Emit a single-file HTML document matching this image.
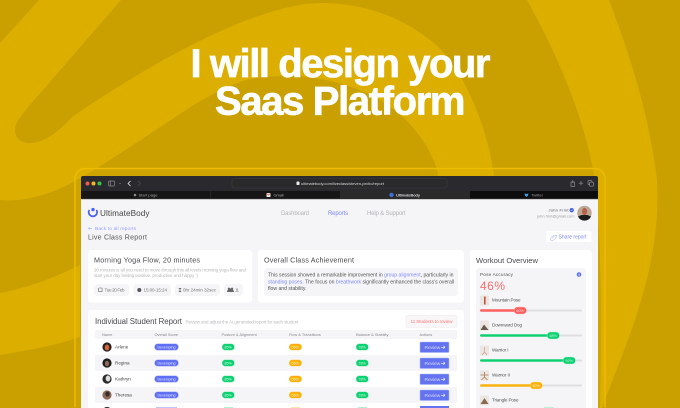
<!DOCTYPE html>
<html><head><meta charset="utf-8"><title>I will design your Saas Platform</title>
<style>
html,body{margin:0;padding:0;width:680px;height:408px;overflow:hidden;background:#c9a000}
svg{display:block}
text{font-family:"Liberation Sans",sans-serif}
</style></head><body>
<svg width="680" height="408" viewBox="0 0 680 408" xmlns="http://www.w3.org/2000/svg" style="position:absolute;left:0;top:0;overflow:hidden">
<defs><filter id="b" filterUnits="userSpaceOnUse" x="75" y="170" width="530" height="238"><feGaussianBlur stdDeviation="0.28"/></filter>
<clipPath id="page"><rect x="81" y="176" width="517" height="232"/></clipPath></defs>
<!-- background -->
<rect width="680" height="408" fill="#dbae00"/>
<g fill="#c9a000">
<path d="M0,0H39L0,43Z"/>
<path d="M121,0H527C560,60 585,120 595,180C602,250 602,330 600,408H500C500,320 500,240 494,175C488,130 465,70 434,43C400,15 360,3 321,3C280,3 200,30 72,117C60,130 45,143 30,143C18,143 14,135 15,127C18,118 30,105 43,90Z"/>
<path d="M0,200C25,202 50,195 77,180C100,168 170,120 197,103C220,90 240,80 256,78C300,72 345,80 380,100C410,118 430,145 438,173C445,250 448,330 450,408H80V265C120,240 170,195 207,178C235,163 270,153 300,158C315,161 325,170 335,185L340,300L80,300V265C50,280 25,288 0,293Z"/>
<path d="M0,355C30,350 60,345 85,335V408H0Z"/>
<path d="M609,0H680V408H602C625,345 662,270 657,180C650,120 632,60 609,0Z"/>
</g>
<!-- headline -->
<g fill="#fff" stroke="#fff" stroke-width=".7" font-weight="700" font-size="40" text-anchor="start">
<text x="190.5" y="77" textLength="300" lengthAdjust="spacing">I will design your</text>
<text x="215" y="114.5" textLength="250.5" lengthAdjust="spacing">Saas Platform</text>
</g>
<!-- frame -->
<path d="M75,407.5V178.5a10,10 0 0 1 10,-10H595a10,10 0 0 1 10,10V407.5Z" fill="#ffc800" fill-opacity=".08"/>
<path d="M75,407.5V178.5a10,10 0 0 1 10,-10H595a10,10 0 0 1 10,10V407.5" fill="none" stroke="#eebc00" stroke-width="1.4"/>
<g filter="url(#b)">
<!-- browser chrome -->
<path d="M81,178a2,2 0 0 1 2,-2H596a2,2 0 0 1 2,2V199H81Z" fill="#2c2c2e"/>
<rect x="81" y="191" width="259" height="8" fill="#141414"/>
<rect x="340" y="191" width="130" height="8" fill="#2a2a2c"/>
<rect x="470" y="191" width="128" height="8" fill="#0e0e0e"/>
<rect x="210" y="191" width=".5" height="8" fill="#333"/>
<circle cx="87.5" cy="183.5" r="2" fill="#ee5a50"/><circle cx="93.5" cy="183.5" r="2" fill="#f4b52c"/><circle cx="99.5" cy="183.5" r="2" fill="#38c24a"/>
<rect x="108.5" y="181" width="6" height="5" rx="1" fill="none" stroke="#8a8a8c" stroke-width=".7"/><path d="M110.5,181v5" stroke="#8a8a8c" stroke-width=".7"/>
<path d="M119,183.2l1,.8 1,-.8" stroke="#8a8a8c" stroke-width=".5" fill="none"/>
<path d="M130.5,181l-2.4,2.5 2.4,2.5" stroke="#ddd" stroke-width=".9" fill="none"/>
<path d="M138,181l2.4,2.5 -2.4,2.5" stroke="#47474a" stroke-width=".9" fill="none"/>
<rect x="232" y="178.5" width="215" height="9.5" rx="2.5" fill="#2a2a2c" stroke="#3c3c3e" stroke-width=".6"/>
<rect x="296.5" y="181.5" width="3" height="3.5" rx=".8" fill="#eee"/>
<text x="301" y="184.8" font-size="4" fill="#d8d8d8" textLength="83">ultimatebody.com/liveclass/steven-pedro/report</text>
<path d="M571,182h3.4v4.5h-3.4zM572.7,180v3" stroke="#8e8e90" stroke-width=".7" fill="none"/>
<path d="M581,181v4.4M578.8,183.2h4.4" stroke="#8e8e90" stroke-width=".7"/>
<rect x="588" y="180.6" width="4" height="4" rx=".8" fill="none" stroke="#8e8e90" stroke-width=".7"/><rect x="589.6" y="182.2" width="4" height="4" rx=".8" fill="#2c2c2e" stroke="#8e8e90" stroke-width=".7"/>
<circle cx="135" cy="195" r="1.3" fill="#888"/><text x="138.5" y="196.7" font-size="4" fill="#aaa" textLength="19">Start page</text>
<rect x="266.5" y="193" width="4" height="4" rx=".6" fill="#eee"/><path d="M266.8,193.6l1.7,1.4 1.7,-1.4" stroke="#d8483a" stroke-width=".7" fill="none"/><text x="273.5" y="196.7" font-size="4" fill="#aaa" textLength="10">Gmail</text>
<circle cx="391.5" cy="195" r="2.2" fill="#3f6fd8"/><text x="396" y="196.7" font-size="4" fill="#cfcfd2" font-weight="700" textLength="24">UltimateBody</text>
<path d="M524.5,193.5q2,.8 4,0l-.6,2.2 -1.4,1.3 -1.4,-1.3z" fill="#3f9fe8"/><text x="531" y="196.7" font-size="4" fill="#9a9a9a" textLength="12">Twitter</text>
<!-- page -->
<rect x="81" y="199" width="517" height="209" fill="#f5f5f8"/>
<rect x="81" y="198.2" width="517" height="1" fill="#2a2a2c"/>
<g clip-path="url(#page)">
<!-- logo -->
<path d="M89,210.6a4.2,4.2 0 1 0 7.8,0" fill="none" stroke="#4d63ee" stroke-width="1.7" stroke-linecap="round"/><circle cx="93" cy="209.6" r="1.7" fill="#4d63ee"/>
<text x="100" y="216" font-size="8.2" fill="#444" textLength="49.5">UltimateBody</text>
<text x="281" y="215.2" font-size="6" fill="#b4b4b8" textLength="28">Dashboard</text>
<text x="328" y="215.2" font-size="6" fill="#7f89f6" textLength="20">Reports</text>
<text x="367" y="215.2" font-size="6" fill="#b4b4b8" textLength="38.5">Help &amp; Support</text>
<text x="548.5" y="211.7" font-size="4" fill="#555" textLength="20">John Frint</text>
<circle cx="571.7" cy="210.2" r="2.2" fill="#4a63e8"/><path d="M570.8,210.2l.7,.7 1.2,-1.2" stroke="#fff" stroke-width=".5" fill="none"/>
<text x="537" y="217.7" font-size="3.9" fill="#a0a0a4" textLength="37.5">john.frint@gmail.com</text>
<circle cx="584.5" cy="213" r="7.2" fill="#bba896"/><path d="M578,216.5a7.2,7.2 0 0 0 13,0l-3.5,-1.5h-6z" fill="#1c1c1e"/><ellipse cx="584.6" cy="211.5" rx="2.6" ry="3.6" fill="#b5624a"/>
<path d="M92,228.5h-3.5m1.4,-1.3l-1.4,1.3 1.4,1.3" stroke="#8a94f6" stroke-width=".5" fill="none"/>
<text x="95" y="230.2" font-size="4.8" fill="#949df7" textLength="41">Back to all reports</text>
<text x="88" y="239.7" font-size="7" fill="#555" textLength="59">Live Class Report</text>
<rect x="546" y="231" width="45.5" height="11" rx="1.5" fill="#fff"/>
<path d="M552,238.5l3,-3a1,1 0 0 1 1.5,1.5l-3.4,3.4a1.6,1.6 0 0 1 -2.3,-2.3l3.2,-3.2" fill="none" stroke="#949df7" stroke-width=".5"/>
<text x="558.5" y="238.5" font-size="5" fill="#7f89f6" textLength="28">Share report</text>
<!-- card 1 -->
<rect x="88" y="250" width="164" height="52.5" rx="3" fill="#fff"/>
<text x="94" y="262.5" font-size="7.2" fill="#4a4a4e" textLength="106">Morning Yoga Flow, 20 minutes</text>
<text x="94" y="271.7" font-size="4.6" fill="#b8b8bc" textLength="152">20 minutes is all you need to move through this all levels morning yoga flow and</text>
<text x="94" y="277" font-size="4.6" fill="#b8b8bc" textLength="104">start your day feeling positive, productive and happy :)</text>
<g fill="#f5f5f8"><rect x="94" y="284" width="35.5" height="12" rx="3.5"/><rect x="133.5" y="284" width="37.5" height="12" rx="3.5"/><rect x="175" y="284" width="45" height="12" rx="3.5"/><rect x="224" y="284" width="19" height="12" rx="3.5"/></g>
<g font-size="4.5" fill="#777"><text x="104.5" y="291.7" textLength="20">Tue 20 Feb</text><text x="143.5" y="291.7" textLength="23.5">15:00-15:24</text><text x="183" y="291.7" textLength="33">0hr 24min 32sec</text><text x="235" y="291.7" textLength="4">11</text></g>
<rect x="98.5" y="288" width="3.6" height="3.6" rx=".5" fill="none" stroke="#666" stroke-width=".6"/><circle cx="139.3" cy="290" r="2" fill="#555"/><path d="M178.5,288h3l-1.5,2 1.5,2h-3l1.5,-2z" fill="#666"/><circle cx="229" cy="288.8" r="1.2" fill="#666"/><circle cx="232" cy="288.8" r="1.2" fill="#666"/><path d="M227,292a2,2 0 0 1 7,0z" fill="#666"/>
<!-- card 2 -->
<rect x="258" y="250" width="206" height="52.5" rx="3" fill="#fff"/>
<text x="264" y="262.5" font-size="7.2" fill="#4a4a4e" textLength="90">Overall Class Achievement</text>
<rect x="264" y="268" width="194" height="28" rx="3" fill="#f5f5f8"/>
<g font-size="5.1" fill="#555">
<text x="268" y="276.7">This session showed a remarkable improvement in <tspan fill="#7f89f6">group alignment</tspan>, particularly in</text>
<text x="268" y="283.3"><tspan fill="#7f89f6">standing poses.</tspan> The focus on <tspan fill="#7f89f6">breathwork</tspan> significantly enhanced the class's overall</text>
<text x="268" y="290">flow and stability.</text>
</g>
<!-- table card -->
<path d="M88,408V313a3,3 0 0 1 3,-3H461a3,3 0 0 1 3,3V408Z" fill="#fff"/>
<text x="95" y="324" font-size="7.9" fill="#4a4a4e" textLength="87">Individual Student Report</text>
<text x="185.5" y="323.7" font-size="4.7" fill="#bbbbc0" textLength="113">Review and adjust the AI generated report for each student</text>
<rect x="406" y="315.5" width="51" height="12" rx="1.5" fill="#f8f6f7" stroke="#eeeaec" stroke-width=".5"/>
<text x="410.5" y="323.2" font-size="4.7" fill="#fb7a7a" textLength="42">11 Students to review</text>
<rect x="95" y="330" width="362" height="9" fill="#f5f5f8"/>
<g font-size="3.9" fill="#888"><text x="102" y="336">Name</text><text x="154.5" y="336">Overall Score</text><text x="221.5" y="336">Posture &amp; Alignment</text><text x="289" y="336">Flow &amp; Transitions</text><text x="356" y="336">Balance &amp; Stability</text><text x="419.5" y="336">Actions</text></g>
<rect x="95" y="355" width="362" height="16" fill="#f5f5f8"/><rect x="95" y="387" width="362" height="16" fill="#f5f5f8"/>
<!-- avatars -->
<circle cx="107" cy="347" r="4.6" fill="#222"/><ellipse cx="107" cy="347.5" rx="2.3" ry="3" fill="#d8643a"/>
<circle cx="107" cy="363" r="4.6" fill="#1c1c1c"/><ellipse cx="107" cy="363.5" rx="2.2" ry="2.8" fill="#8a6a58"/>
<circle cx="107" cy="379" r="4.6" fill="#2a2a2a"/><ellipse cx="108" cy="378.5" rx="2.4" ry="3" fill="#ddd"/>
<circle cx="107" cy="395" r="4.6" fill="#8a6a58"/><ellipse cx="107.5" cy="394" rx="2.2" ry="2.6" fill="#3a2e2a"/>
<path d="M104,408a4.6,4.6 0 0 1 6,0Z" fill="#333"/>
<g font-size="4.6" fill="#444"><text x="115" y="348.7">Arlene</text><text x="115" y="364.7">Regina</text><text x="115" y="380.7">Kathryn</text><text x="115" y="396.7">Theresa</text></g>
<!-- pills -->
<g fill="#5f70f2" stroke="#b5bdf9" stroke-width=".5"><rect x="154.5" y="343.7" width="24" height="6.6" rx="3.3"/><rect x="154.5" y="359.7" width="24" height="6.6" rx="3.3"/><rect x="154.5" y="375.7" width="24" height="6.6" rx="3.3"/><rect x="154.5" y="391.7" width="24" height="6.6" rx="3.3"/></g>
<g fill="#10d070" stroke="#a5eec8" stroke-width=".5"><rect x="222" y="343.7" width="12.5" height="6.6" rx="3.3"/><rect x="222" y="359.7" width="12.5" height="6.6" rx="3.3"/><rect x="222" y="375.7" width="12.5" height="6.6" rx="3.3"/><rect x="222" y="391.7" width="12.5" height="6.6" rx="3.3"/>
<rect x="356" y="343.7" width="12.5" height="6.6" rx="3.3"/><rect x="356" y="359.7" width="12.5" height="6.6" rx="3.3"/><rect x="356" y="375.7" width="12.5" height="6.6" rx="3.3"/><rect x="356" y="391.7" width="12.5" height="6.6" rx="3.3"/></g>
<g fill="#f8b208" stroke="#fcdf9a" stroke-width=".5"><rect x="289" y="343.7" width="12.8" height="6.6" rx="3.3"/><rect x="289" y="359.7" width="12.8" height="6.6" rx="3.3"/><rect x="289" y="375.7" width="12.8" height="6.6" rx="3.3"/><rect x="289" y="391.7" width="12.8" height="6.6" rx="3.3"/></g>
<rect x="156" y="407.4" width="21" height=".6" fill="#8f9cf5"/><rect x="224" y="407.4" width="9" height=".6" fill="#7de4ae"/><rect x="291" y="407.4" width="9" height=".6" fill="#fbd27a"/><rect x="358" y="407.4" width="9" height=".6" fill="#7de4ae"/>
<g font-size="3.6" fill="#dfe3ff"><text x="157.5" y="348.3">Developing</text><text x="157.5" y="364.3">Developing</text><text x="157.5" y="380.3">Developing</text><text x="157.5" y="396.3">Developing</text></g>
<g font-size="3.6" fill="#d5f8e6"><text x="224.5" y="348.3">85%</text><text x="224.5" y="364.3">85%</text><text x="224.5" y="380.3">85%</text><text x="224.5" y="396.3">85%</text><text x="358.5" y="348.3">78%</text><text x="358.5" y="364.3">78%</text><text x="358.5" y="380.3">78%</text><text x="358.5" y="396.3">78%</text></g>
<g font-size="3.6" fill="#fff0c8"><text x="291.5" y="348.3">56%</text><text x="291.5" y="364.3">56%</text><text x="291.5" y="380.3">56%</text><text x="291.5" y="396.3">56%</text></g>
<!-- review buttons -->
<g fill="#6373f0" stroke="#aab3f8" stroke-width=".6"><rect x="420" y="342" width="29" height="10.5" rx="1"/><rect x="420" y="358" width="29" height="10.5" rx="1"/><rect x="420" y="374" width="29" height="10.5" rx="1"/><rect x="420" y="390" width="29" height="10.5" rx="1"/></g>
<rect x="420" y="406" width="29" height="2" fill="#6373f0"/>
<g font-size="4.8" fill="#d8dcfd"><text x="424.5" y="349">Review</text><text x="424.5" y="365">Review</text><text x="424.5" y="381">Review</text><text x="424.5" y="397">Review</text></g>
<g stroke="#eef0ff" stroke-width=".7" fill="none"><path d="M441,347.3h3.8m-1.4,-1.4l1.4,1.4 -1.4,1.4"/><path d="M441,363.3h3.8m-1.4,-1.4l1.4,1.4 -1.4,1.4"/><path d="M441,379.3h3.8m-1.4,-1.4l1.4,1.4 -1.4,1.4"/><path d="M441,395.3h3.8m-1.4,-1.4l1.4,1.4 -1.4,1.4"/></g>
<!-- workout -->
<path d="M470,408V253a3,3 0 0 1 3,-3H589a3,3 0 0 1 3,3V408Z" fill="#fff"/>
<text x="476" y="263" font-size="7.6" fill="#4a4a4e" textLength="62">Workout Overview</text>
<path d="M476,408V271a3,3 0 0 1 3,-3H583a3,3 0 0 1 3,3V408Z" fill="#f5f5f8"/>
<text x="480" y="276" font-size="4.7" fill="#555" textLength="33">Pose Accuracy</text>
<circle cx="579" cy="274.5" r="2.3" fill="#5f70f2"/><rect x="578.7" y="273.5" width=".7" height="2.2" fill="#fff"/>
<text x="480" y="290" font-size="12" fill="#fb6e6e" textLength="25">46%</text>
<!-- pose rows -->
<g fill="#ebe6e2"><rect x="480" y="295.5" width="9" height="10" rx=".8"/><rect x="480" y="320.5" width="9" height="10" rx=".8"/><rect x="480" y="345.5" width="9" height="10" rx=".8"/><rect x="480" y="370.5" width="9" height="10" rx=".8"/><rect x="480" y="395.5" width="9" height="10" rx=".8"/></g>
<rect x="484" y="296.5" width="1.6" height="8" fill="#c85040"/>
<path d="M480.5,330l3.5,-5.5 4.5,5.5z" fill="#6a5a48"/>
<path d="M484.5,347v5l-2.5,3M484.5,352l2.5,3" stroke="#c8a090" stroke-width=".7" fill="none"/>
<path d="M480.5,375h8M484.5,372v5l-3,3M484.5,377l3,3" stroke="#a87a58" stroke-width=".8" fill="none"/>
<path d="M480.5,404l4,-6 4,6z" fill="#8a6a50"/>
<g font-size="4.6" fill="#555"><text x="492" y="301.7" textLength="28.5">Mountain Pose</text><text x="492" y="326.7" textLength="30">Downward Dog</text><text x="492" y="351.7" textLength="16.5">Warrior I</text><text x="492" y="376.7" textLength="18">Warrior II</text><text x="492" y="401.7" textLength="26.5">Triangle Pose</text></g>
<g fill="#dedee2"><rect x="480" y="309.5" width="102" height="2" rx="1"/><rect x="480" y="334.5" width="102" height="2" rx="1"/><rect x="480" y="359.5" width="102" height="2" rx="1"/><rect x="480" y="384.5" width="102" height="2" rx="1"/></g>
<rect x="480" y="309.3" width="40" height="2.4" rx="1.2" fill="#fb5f5f"/><rect x="514" y="307" width="12.5" height="7" rx="3.5" fill="#fb5f5f" stroke="#fdb5b5" stroke-width=".5"/>
<rect x="480" y="334.3" width="73" height="2.4" rx="1.2" fill="#10d070"/><rect x="547" y="332" width="12.5" height="7" rx="3.5" fill="#10d070" stroke="#a5eec8" stroke-width=".5"/>
<rect x="480" y="359.3" width="89" height="2.4" rx="1.2" fill="#10d070"/><rect x="563" y="357" width="12.5" height="7" rx="3.5" fill="#10d070" stroke="#a5eec8" stroke-width=".5"/>
<rect x="480" y="384.3" width="56" height="2.4" rx="1.2" fill="#f8b208"/><rect x="530" y="382" width="12.5" height="7" rx="3.5" fill="#f8b208" stroke="#fcdf9a" stroke-width=".5"/>
<rect x="544" y="407" width="10" height="1" fill="#bff0d5"/>
<g font-size="3.6" fill="#fff" fill-opacity=".8"><text x="516.5" y="312">60%</text><text x="549.5" y="337">68%</text><text x="565.5" y="362">92%</text><text x="532.5" y="387">50%</text></g>
</g>
</g>
</svg>
</body></html>
